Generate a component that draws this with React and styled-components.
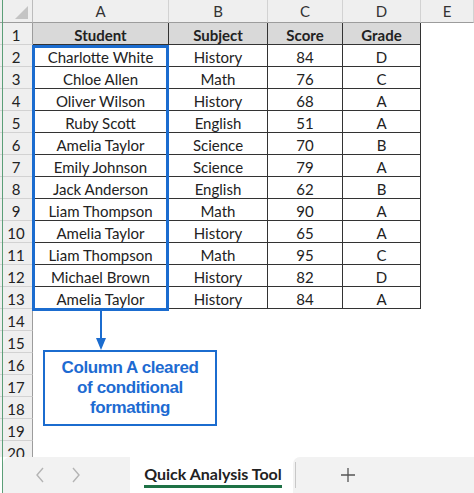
import React from 'react';
import styled, { createGlobalStyle } from 'styled-components';

const Global = createGlobalStyle`
  html, body { margin: 0; padding: 0; background: #fff; }
  body { font-family: Lato, "Noto Sans", sans-serif; }
  * { box-sizing: border-box; }
`;

const Page = styled.div`
  position: relative;
  width: 474px;
  height: 493px;
  overflow: hidden;
  display: flex;
  flex-direction: column;
  &::before {
    content: '';
    position: absolute;
    left: 2px;
    top: 0;
    bottom: 0;
    width: 1px;
    background: #5c9f78;
    z-index: 5;
  }
`;

const Sheet = styled.div`
  position: relative;
  height: 457px;
  overflow: hidden;
  display: grid;
  grid-template-columns: 33px 136px 99px 75px 78px 1fr;
  grid-template-rows: 23px;
  grid-auto-rows: 22px;
  font-size: 15px;
  color: #222;
`;

const Corner = styled.div`
  position: relative;
  background: #efefef;
  border-right: 1px solid #bcbcbc;
  border-bottom: 1px solid #9c9c9c;
  &::after {
    content: '';
    position: absolute;
    right: 4px;
    bottom: 3px;
    border-style: solid;
    border-width: 0 0 13px 13px;
    border-color: transparent transparent #c4c4c4 transparent;
  }
`;

const ColHead = styled.div`
  background: #efefef;
  border-right: 1px solid #d2d2d2;
  border-bottom: 1px solid #9c9c9c;
  display: flex;
  align-items: center;
  justify-content: center;
  color: #333;
  font-size: 15px;
`;

const RowHead = styled.div`
  background: #efefef;
  border-right: 1px solid #9c9c9c;
  border-bottom: 1px solid #d2d2d2;
  display: flex;
  align-items: center;
  justify-content: center;
  color: #222;
  font-size: 15px;
  padding-top: 2px;
`;

const Cell = styled.div`
  display: flex;
  align-items: center;
  justify-content: center;
  white-space: nowrap;
  padding-top: 2px;
  font-size: 15px;
  color: #222;
  background: ${p => (p.$head ? '#d9d9d9' : '#fff')};
  font-weight: ${p => (p.$head ? 700 : 400)};
  border-right: ${p => (p.$boxed ? '1px solid #333' : 'none')};
  border-bottom: ${p => (p.$boxed ? '1px solid #333' : 'none')};
`;

const Selection = styled.div`
  position: absolute;
  left: 32px;
  top: 45px;
  width: 137px;
  height: 266px;
  border: 3px solid #1b6ccf;
  pointer-events: none;
`;

const ArrowSvg = styled.svg`
  position: absolute;
  left: 95px;
  top: 311px;
`;

const Callout = styled.div`
  position: absolute;
  left: 43px;
  top: 350px;
  width: 174px;
  height: 76px;
  border: 2px solid #1b6ccf;
  background: #fff;
  display: flex;
  flex-direction: column;
  align-items: center;
  justify-content: center;
  font-family: "Liberation Sans", Arial, sans-serif;
  font-weight: 700;
  font-size: 17px;
  line-height: 20px;
  letter-spacing: -0.4px;
  color: #1d6bd2;
  text-align: center;
`;

const TabBar = styled.div`
  flex: 1;
  display: flex;
  align-items: stretch;
  background: #fff;
`;

const NavArea = styled.div`
  width: 127px;
  margin-left: 3px;
  background: #f2f2f2;
  border-top-left-radius: 7px;
  display: flex;
  align-items: center;
  padding-left: 32px;
  gap: 26px;
`;

const Tab = styled.div`
  width: 160px;
  margin-left: 3px;
  background: #fff;
  display: flex;
  align-items: center;
  justify-content: center;
  padding-bottom: 3px;
`;

const TabLabel = styled.span`
  font-weight: 700;
  font-size: 16px;
  color: #222;
  padding-bottom: 2px;
  border-bottom: 3px solid #1e7145;
  line-height: 18px;
  margin-top: 5px;
`;

const Rest = styled.div`
  flex: 1;
  background: #f2f2f2;
  border-top-left-radius: 7px;
  display: flex;
  align-items: center;
  position: relative;
`;

const Separator = styled.div`
  width: 1px;
  height: 26px;
  background: #c8c8c8;
  margin-left: 2px;
`;

const Plus = styled.div`
  margin-left: 44px;
  display: flex;
  align-items: center;
`;

const rows = [
  ['Charlotte White', 'History', 84, 'D'],
  ['Chloe Allen', 'Math', 76, 'C'],
  ['Oliver Wilson', 'History', 68, 'A'],
  ['Ruby Scott', 'English', 51, 'A'],
  ['Amelia Taylor', 'Science', 70, 'B'],
  ['Emily Johnson', 'Science', 79, 'A'],
  ['Jack Anderson', 'English', 62, 'B'],
  ['Liam Thompson', 'Math', 90, 'A'],
  ['Amelia Taylor', 'History', 65, 'A'],
  ['Liam Thompson', 'Math', 95, 'C'],
  ['Michael Brown', 'History', 82, 'D'],
  ['Amelia Taylor', 'History', 84, 'A'],
];

const Chevron = ({ dir }) => (
  <svg width="10" height="16" viewBox="0 0 10 16">
    <path
      d={dir === 'left' ? 'M8 1 L2 8 L8 15' : 'M2 1 L8 8 L2 15'}
      fill="none"
      stroke="#b4b4b4"
      strokeWidth="1.4"
    />
  </svg>
);

export default function App() {
  const cols = ['A', 'B', 'C', 'D', 'E'];
  const allRows = [['Student', 'Subject', 'Score', 'Grade'], ...rows];
  const cells = [];
  cells.push(<Corner key="corner" />);
  cols.forEach(c => cells.push(<ColHead key={'h' + c}>{c}</ColHead>));
  for (let r = 1; r <= 20; r++) {
    cells.push(<RowHead key={'r' + r}>{r}</RowHead>);
    const data = allRows[r - 1];
    for (let c = 0; c < 5; c++) {
      if (data && c < 4) {
        cells.push(
          <Cell key={r + '-' + c} $boxed $head={r === 1}>
            {data[c]}
          </Cell>
        );
      } else {
        cells.push(<Cell key={r + '-' + c} />);
      }
    }
  }
  return (
    <Page>
      <Global />
      <Sheet>
        {cells}
        <Selection />
        <ArrowSvg width="12" height="40" viewBox="0 0 12 40">
          <line x1="6" y1="0" x2="6" y2="29" stroke="#1b6ccf" strokeWidth="2" />
          <polygon points="1,27 11,27 6,39" fill="#1b6ccf" />
        </ArrowSvg>
        <Callout>
          <span>Column A cleared</span>
          <span>of conditional</span>
          <span>formatting</span>
        </Callout>
      </Sheet>
      <TabBar>
        <NavArea>
          <Chevron dir="left" />
          <Chevron dir="right" />
        </NavArea>
        <Tab>
          <TabLabel>Quick Analysis Tool</TabLabel>
        </Tab>
        <Rest>
          <Separator />
          <Plus>
            <svg width="16" height="16" viewBox="0 0 16 16">
              <path d="M8 1 V15 M1 8 H15" stroke="#555" strokeWidth="1.3" fill="none" />
            </svg>
          </Plus>
        </Rest>
      </TabBar>
    </Page>
  );
}
